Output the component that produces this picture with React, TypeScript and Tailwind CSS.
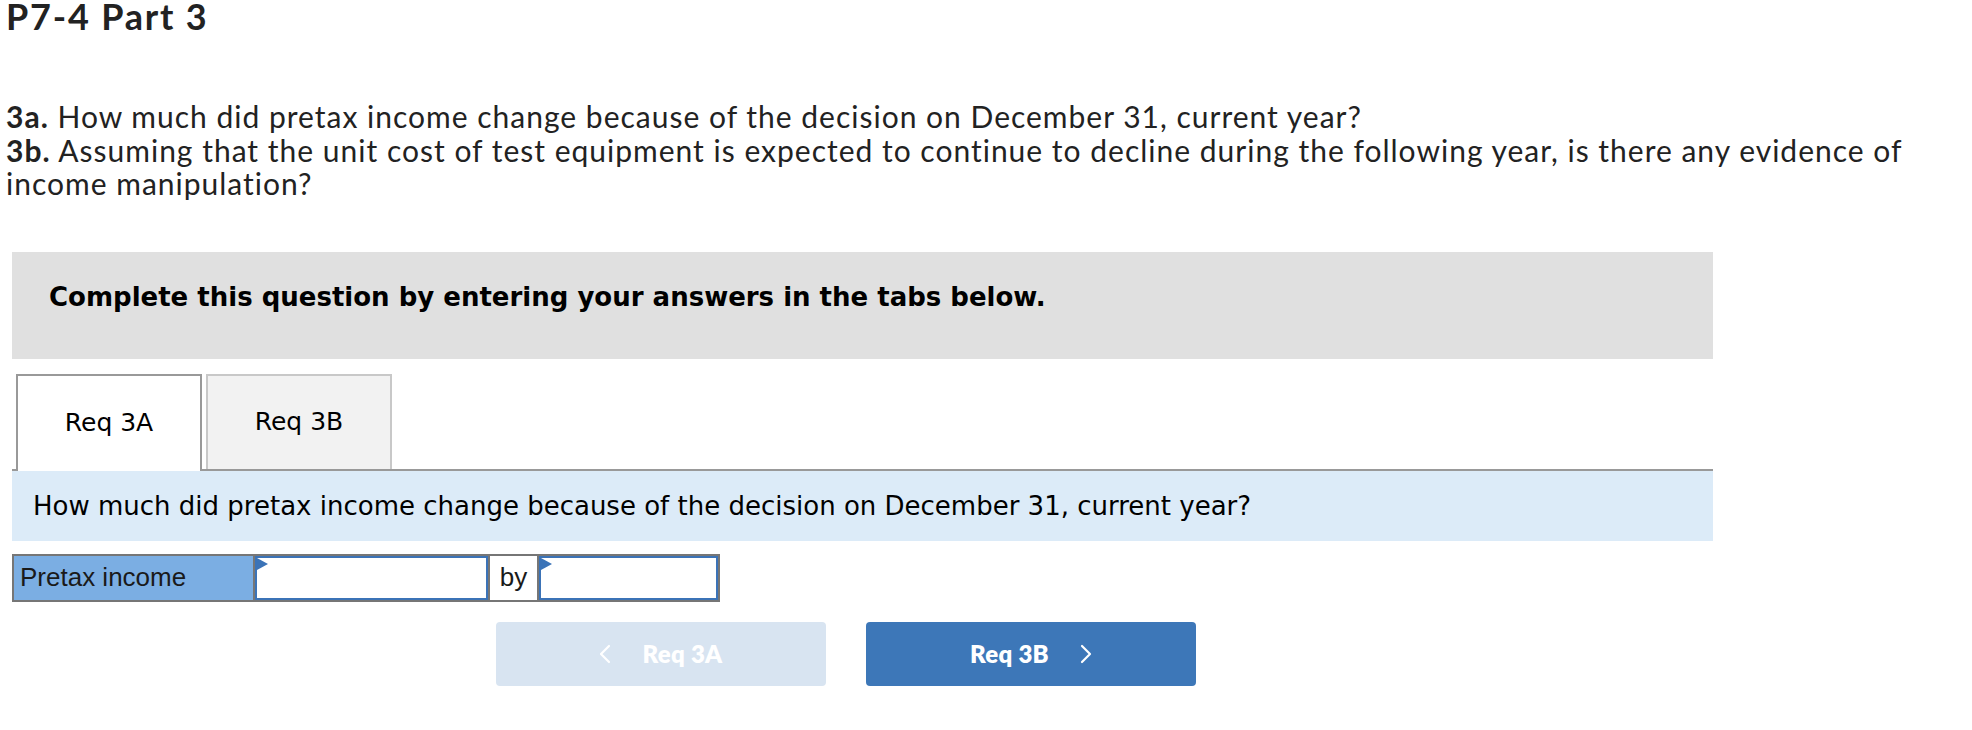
import React, { useState } from 'react';

const ChevronLeft: React.FC<{ className?: string }> = ({ className }) => (
    <svg className={className} viewBox="0 0 12 20" fill="none" stroke="currentColor" strokeWidth="2.2" strokeLinecap="round" strokeLinejoin="round">
        <polyline points="10 2 2 10 10 18"></polyline>
    </svg>
);

const ChevronRight: React.FC<{ className?: string }> = ({ className }) => (
    <svg className={className} viewBox="0 0 12 20" fill="none" stroke="currentColor" strokeWidth="2.2" strokeLinecap="round" strokeLinejoin="round">
        <polyline points="2 2 10 10 2 18"></polyline>
    </svg>
);

const AnswerInput: React.FC<{ className: string; value: string; onChange: (v: string) => void }> = ({ className, value, onChange }) => (
    <div className={`relative bg-white border-2 border-[#3b73b7] ${className}`}>
        <svg className="absolute left-0 top-0 w-[11px] h-[12px]" viewBox="0 0 11 12">
            <polygon points="0 0 11 6 0 12" fill="#3b73b7"></polygon>
        </svg>
        <input
            type="text"
            value={value}
            onChange={(e) => onChange(e.target.value)}
            className="w-full h-full px-2 bg-transparent focus:outline-none font-['Liberation_Sans',Arial,sans-serif] text-[24px] text-right"
        />
    </div>
);

export default function App() {
    const [tab, setTab] = useState<'3A' | '3B'>('3A');
    const [direction, setDirection] = useState('');
    const [amount, setAmount] = useState('');

    return (
        <div className="min-h-screen bg-white text-[#222]">
            <div className="pl-[6px]">
                <h1 className="font-['Lato',sans-serif] font-bold text-[36px] leading-[32px] tracking-[1.8px]">P7-4 Part 3</h1>
                <p className="mt-[68px] font-['Lato',sans-serif] text-[30px] leading-[33.5px] tracking-[1px] pr-[60px]">
                    <b>3a.</b> How much did pretax income change because of the decision on December 31, current year?
                    <br />
                    <b>3b.</b> Assuming that the unit cost of test equipment is expected to continue to decline during the following year, is there any evidence of income manipulation?
                </p>
            </div>

            <div className="ml-[12px] w-[1701px] mt-[51px]">
                <div className="h-[107px] bg-[#e0e0e0] flex items-center pl-[37px] pb-[16px]">
                    <span className="font-['DejaVu_Sans',Verdana,sans-serif] font-bold text-[26px] text-black">
                        Complete this question by entering your answers in the tabs below.
                    </span>
                </div>

                <div className="mt-[15px] pl-[4px] flex gap-[4px] items-end">
                    {(['3A', '3B'] as const).map((t) => (
                        <button
                            key={t}
                            type="button"
                            onClick={() => setTab(t)}
                            className={`w-[186px] font-['DejaVu_Sans',Verdana,sans-serif] text-[25px] text-black border-2 border-b-0 ${
                                tab === t
                                    ? 'h-[97px] -mb-[2px] relative bg-white border-[#999]'
                                    : 'h-[95px] bg-[#f2f2f2] border-[#c8c8c8]'
                            }`}
                        >
                            Req {t}
                        </button>
                    ))}
                </div>

                <div className="h-[72px] border-t-2 border-[#999] bg-[#dcebf8] flex items-center pl-[21px] pt-[2px]">
                    <span className="font-['DejaVu_Sans',Verdana,sans-serif] text-[26px] text-black">
                        {tab === '3A'
                            ? 'How much did pretax income change because of the decision on December 31, current year?'
                            : 'Is there any evidence of income manipulation?'}
                    </span>
                </div>

                <div className="mt-[13px] w-[708px] h-[48px] p-[2px] bg-[#767676] flex gap-[2px]">
                    <div className="w-[239px] bg-[#7baee3] flex items-center pl-[6px] font-['Liberation_Sans',Arial,sans-serif] text-[26px] text-[#1a1a1a]">
                        Pretax income
                    </div>
                    <AnswerInput className="w-[233px]" value={direction} onChange={setDirection} />
                    <div className="w-[47px] bg-white flex items-center justify-center font-['Liberation_Sans',Arial,sans-serif] text-[26px] text-[#1a1a1a]">
                        by
                    </div>
                    <AnswerInput className="flex-1" value={amount} onChange={setAmount} />
                </div>

                <div className="mt-[20px] ml-[484px] flex gap-[40px]">
                    <button
                        type="button"
                        disabled={tab === '3A'}
                        onClick={() => setTab('3A')}
                        className="w-[330px] h-[64px] rounded-[4px] bg-[#d8e4f1] text-white flex items-center justify-center gap-[31px] font-['Lato',sans-serif] font-extrabold text-[24px] tracking-[0.3px]"
                    >
                        <ChevronLeft className="w-[12px] h-[20px]" />
                        <span>Req 3A</span>
                    </button>
                    <button
                        type="button"
                        onClick={() => setTab('3B')}
                        className="w-[330px] h-[64px] rounded-[4px] bg-[#3d77b8] text-white flex items-center justify-center gap-[31px] font-['Lato',sans-serif] font-extrabold text-[24px] tracking-[0.3px]"
                    >
                        <span>Req 3B</span>
                        <ChevronRight className="w-[12px] h-[20px]" />
                    </button>
                </div>
            </div>
        </div>
    );
}
